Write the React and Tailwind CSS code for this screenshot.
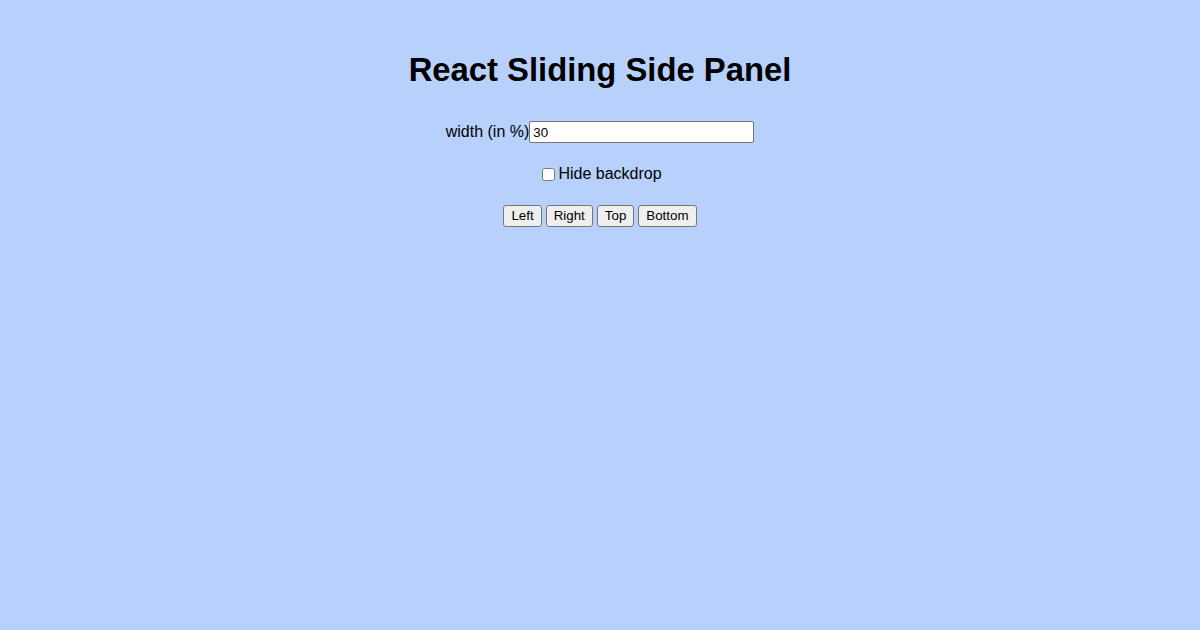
import React, { useState } from "react";

const App = () => {
  const [width, setWidth] = useState("30");
  const [hide, setHide] = useState(false);
  return (
    <div
      className="min-h-screen w-full bg-[#b8d0fc] text-black text-center pt-[51px]"
      style={{ fontFamily: '"Liberation Sans", Arial, sans-serif' }}
    >
      <h1 className="text-[32.8px] font-bold leading-[37px]">React Sliding Side Panel</h1>
      <div className="mt-[33px] flex justify-center items-center text-[16px] h-[22px]">
        <label htmlFor="w">width (in %)</label>
        <input
          id="w"
          type="text"
          value={width}
          onChange={(e) => setWidth(e.target.value)}
          className="w-[225px] h-[22px] bg-white border border-[#767676] rounded-[2px] px-[3px] text-[13.33px] outline-none"
        />
      </div>
      <div className="mt-[22px] flex justify-center items-center text-[16px] h-[18px]">
        <input
          id="hide"
          type="checkbox"
          checked={hide}
          onChange={() => setHide(!hide)}
          className="w-[13px] h-[13px] ml-[4px] mr-[3px]"
        />
        <label htmlFor="hide">Hide backdrop</label>
      </div>
      <div className="mt-[22px] flex justify-center gap-[4px]">
        {["Left", "Right", "Top", "Bottom"].map((b) => (
          <button
            key={b}
            className="h-[22px] bg-[#efefef] border border-[#767676] rounded-[3px] px-[7px] text-[13.33px] leading-none"
          >
            {b}
          </button>
        ))}
      </div>
    </div>
  );
};

export default App;
